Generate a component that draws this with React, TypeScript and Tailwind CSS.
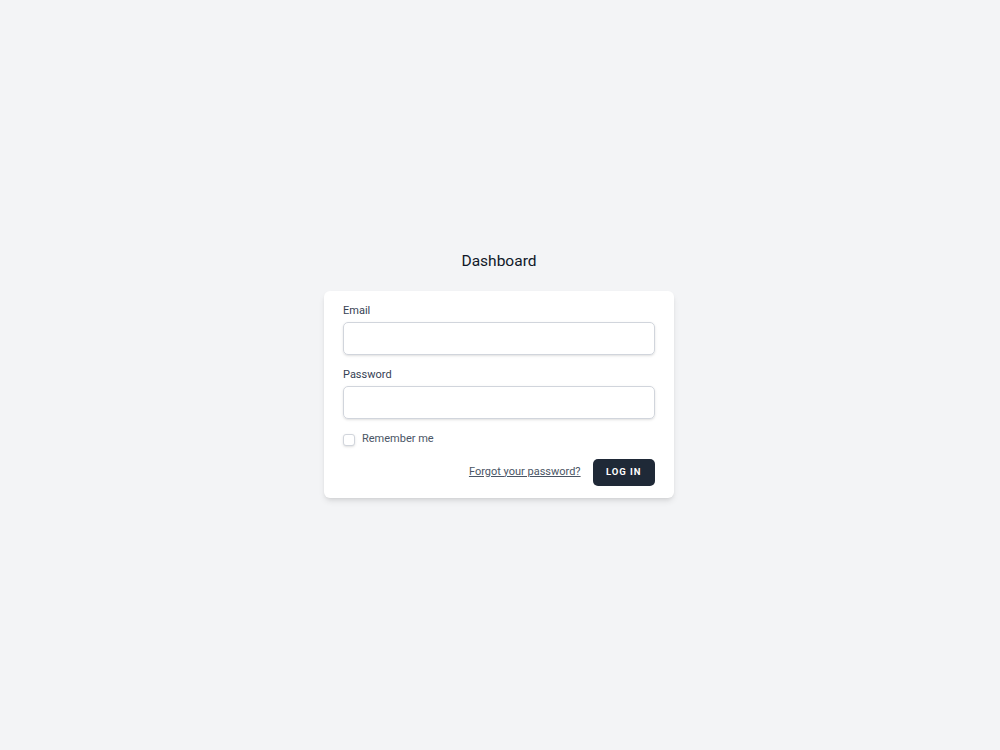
import React from 'react';

const App = () => {
  return (
    <div
      className="min-h-screen flex flex-col justify-center items-center bg-[#f3f4f6] pb-[2px] pr-[2px]"
      style={{ fontFamily: 'Roboto, "Liberation Sans", sans-serif' }}
    >
      <h1 className="text-[15.5px] leading-[20px] text-gray-900">Dashboard</h1>

      <div className="mt-[20px] w-[350px] bg-white rounded-[6px] shadow-md px-[19px] pt-[12px] pb-[12px]">
        <form onSubmit={(e) => e.preventDefault()}>
          <div>
            <label className="block text-[11px] leading-[16px] text-gray-700">Email</label>
            <input
              type="email"
              className="mt-[3px] block w-full h-[33px] rounded-[5px] border border-gray-300 shadow-sm outline-none"
            />
          </div>

          <div className="mt-[12px]">
            <label className="block text-[11px] leading-[16px] text-gray-700">Password</label>
            <input
              type="password"
              className="mt-[3px] block w-full h-[33px] rounded-[5px] border border-gray-300 shadow-sm outline-none"
            />
          </div>

          <div className="mt-[13px] flex items-center h-[16px]">
            <span className="w-[12px] h-[12px] rounded-[3px] border border-gray-300 shadow-sm bg-white" />
            <span className="ml-[7px] text-[11px] text-gray-600">Remember me</span>
          </div>

          <div className="mt-[11px] flex items-center justify-end">
            <a href="#" className="text-[11px] text-gray-600 underline">
              Forgot your password?
            </a>
            <button
              type="submit"
              className="ml-[12px] h-[27px] px-[13.5px] rounded-[5px] bg-[#1f2937] text-white text-[9.5px] font-bold uppercase tracking-[0.1em]"
            >
              Log in
            </button>
          </div>
        </form>
      </div>
    </div>
  );
};

export default App;
